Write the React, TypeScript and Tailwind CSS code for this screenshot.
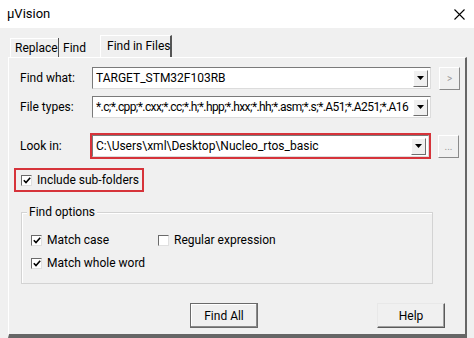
import React from "react";

const font = { fontFamily: 'Roboto, "Noto Sans CJK SC", sans-serif' };

function DropArrow() {
  return (
    <div className="flex h-[17px] w-[15px] items-center justify-center border border-t-white border-l-white border-b-[#6f6f6f] border-r-[#6f6f6f] bg-[#f0f0f0]">
      <svg width="7" height="4" viewBox="0 0 7 4">
        <path d="M0 0 H7 L3.5 4 Z" fill="#000" />
      </svg>
    </div>
  );
}

function Combo({ value, red, tight }: { value: string; red?: boolean; tight?: boolean }) {
  return (
    <div className={red ? "w-[341px] border-2 border-[#d6333a]" : "w-[341px] p-[1px]"}>
      <div className="flex h-[22px] items-center border border-t-[#7a7a7a] border-l-[#7a7a7a] border-b-[#dcdcdc] border-r-[#dcdcdc] bg-white pl-[3px] pr-[2px]">
        <span
          className={
            tight
              ? "flex-1 overflow-hidden whitespace-nowrap text-[12px] tracking-[-0.6px] text-black"
              : "flex-1 overflow-hidden whitespace-nowrap text-[12px] text-black"
          }
        >
          {value}
        </span>
        <DropArrow />
      </div>
    </div>
  );
}

function SideButton({ label }: { label: string }) {
  return (
    <div className="ml-[7px] flex h-[23px] w-[21px] items-center justify-center border border-t-white border-l-white border-b-[#8a8a8a] border-r-[#8a8a8a] bg-[#f0f0f0] text-[10px] text-[#9a9a9a]">
      {label}
    </div>
  );
}

function CheckBox({ checked }: { checked: boolean }) {
  return (
    <div className="flex h-[11px] w-[11px] shrink-0 items-center justify-center border border-t-[#6a6a6a] border-l-[#6a6a6a] border-b-[#e0e0e0] border-r-[#e0e0e0] bg-white">
      {checked && (
        <svg width="8" height="7" viewBox="0 0 8 7">
          <path d="M0.8 3.2 L3 5.6 L7.2 0.8" stroke="#000" strokeWidth="1.6" fill="none" />
        </svg>
      )}
    </div>
  );
}

function Check({ label, checked }: { label: string; checked: boolean }) {
  return (
    <div className="flex items-center gap-[5px] whitespace-nowrap text-[12px] text-black">
      <CheckBox checked={checked} />
      <span>{label}</span>
    </div>
  );
}

function PushButton({ label, primary }: { label: string; primary?: boolean }) {
  return (
    <div
      className={
        primary
          ? "flex h-[25px] w-[68px] items-center justify-center border border-[#6a6a6a] bg-[#f0f0f0] text-[12px] text-black shadow-[inset_-1px_-1px_0_#8a8a8a,inset_1px_1px_0_#fff]"
          : "flex h-[25px] w-[68px] items-center justify-center border border-t-[#e8e8e8] border-l-[#e8e8e8] border-b-[#5a5a5a] border-r-[#5a5a5a] bg-[#f0f0f0] text-[12px] text-black shadow-[inset_-1px_-1px_0_#a0a0a0]"
      }
    >
      {label}
    </div>
  );
}

export default function App() {
  return (
    <div className="h-[338px] w-[474px] overflow-hidden bg-[#f0f0f0]" style={font}>
      <div className="flex h-[28px] items-center justify-between bg-white pl-[7px] pr-[9px]">
        <span className="text-[13px] text-black">μVision</span>
        <svg width="11" height="11" viewBox="0 0 11 11">
          <path d="M0.5 0.5 L10.5 10.5 M10.5 0.5 L0.5 10.5" stroke="#000" strokeWidth="1.1" />
        </svg>
      </div>

      <div className="pl-[8px] pr-[8px] pt-[7px]">
        <div className="relative z-10 flex h-[22px] items-end whitespace-nowrap pl-[2px]">
          <div className="flex h-[19px] w-[48px] items-center border-l border-t border-white pl-[4px] text-[12px] text-black">
            Replace
          </div>
          <div className="flex h-[19px] w-[42px] items-center border-l border-[#555] pl-[4px] text-[12px] text-black">
            Find
          </div>
          <div className="flex h-[22px] w-[72px] items-start border-l border-t border-white border-r-2 border-r-[#555] bg-[#f0f0f0] pl-[6px] pt-[1px] text-[12px] text-black">
            Find in Files
          </div>
        </div>

        <div className="flex h-[281px] w-[459px] flex-col border-l border-t border-white border-r-2 border-b-4 border-r-[#666] border-b-[#666] pl-[11px] pt-[8px]">
          <div className="flex items-center">
            <span className="w-[71px] whitespace-nowrap text-[12px] text-black">Find what:</span>
            <Combo value="TARGET_STM32F103RB" />
            <SideButton label=">" />
          </div>
          <div className="mt-[5px] flex items-center">
            <span className="w-[71px] whitespace-nowrap text-[12px] text-black">File types:</span>
            <Combo tight value="*.c;*.cpp;*.cxx;*.cc;*.h;*.hpp;*.hxx;*.hh;*.asm;*.s;*.A51;*.A251;*.A16" />
          </div>
          <div className="mt-[14px] flex items-center">
            <span className="w-[70px] whitespace-nowrap text-[12px] text-black">Look in:</span>
            <Combo red value="C:\Users\xml\Desktop\Nucleo_rtos_basic" />
            <SideButton label="..." />
          </div>
          <div className="mt-[9px] flex">
            <div className="-ml-[6px] flex h-[24px] w-[130px] items-center border-2 border-[#d6333a] pl-[5px]">
              <Check label="Include sub-folders" checked />
            </div>
          </div>

          <div className="relative ml-[1px] mt-[20px] h-[72px] w-[412px] border border-[#d3d3d3] shadow-[inset_1px_1px_0_#fff]">
            <span className="absolute -top-[10px] left-[5px] whitespace-nowrap bg-[#f0f0f0] px-[2px] text-[12px] text-black">
              Find options
            </span>
            <div className="flex pl-[9px] pt-[18px]">
              <div className="w-[127px]">
                <Check label="Match case" checked />
              </div>
              <Check label="Regular expression" checked={false} />
            </div>
            <div className="pl-[9px] pt-[5px]">
              <Check label="Match whole word" checked />
            </div>
          </div>

          <div className="mt-[19px] flex">
            <div className="ml-[170px]">
              <PushButton label="Find All" primary />
            </div>
            <div className="ml-[119px]">
              <PushButton label="Help" />
            </div>
          </div>
        </div>
      </div>
    </div>
  );
}
